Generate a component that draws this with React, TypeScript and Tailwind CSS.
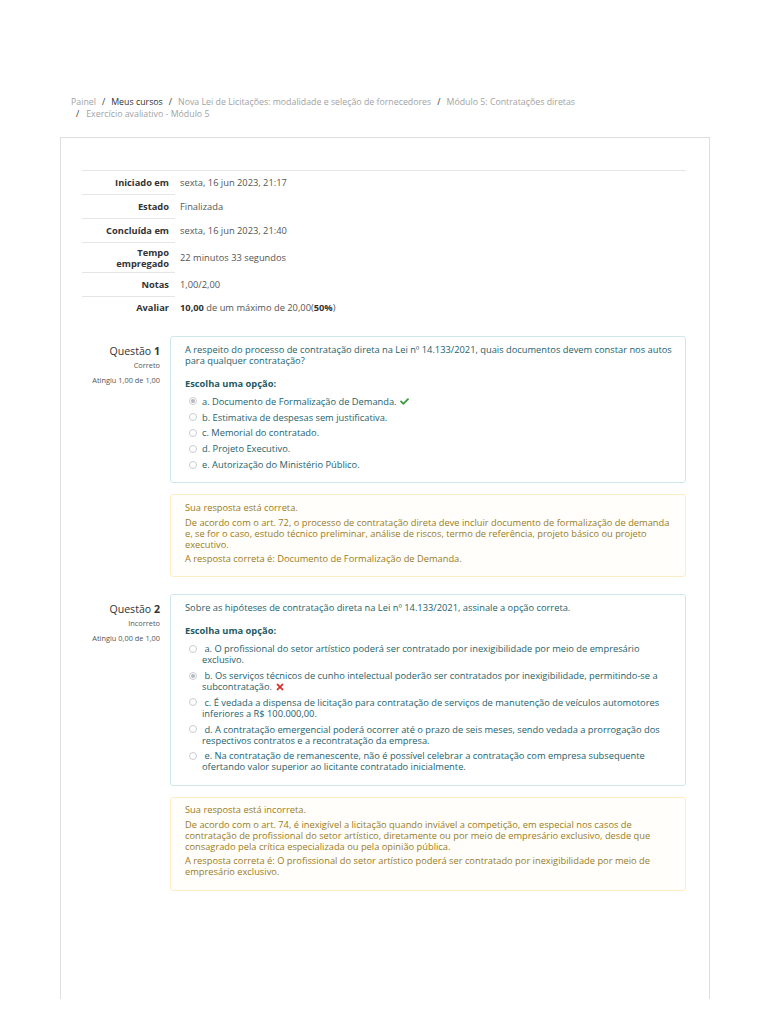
import React from 'react';

const font = { fontFamily: '"Open Sans", "Noto Sans", sans-serif' };

type Option = { text: string; checked?: boolean; mark?: 'ok' | 'bad' };

const CheckIcon = () => (
  <svg viewBox="0 0 512 512" className="inline-block w-[9px] h-[9px] ml-[3px] -mt-[2px] fill-[#3a9a3e]">
    <path d="M173.898 439.404l-166.4-166.4c-9.997-9.997-9.997-26.206 0-36.204l36.203-36.204c9.997-9.998 26.207-9.998 36.204 0L192 312.69 432.095 72.596c9.997-9.997 26.207-9.997 36.204 0l36.203 36.204c9.997 9.997 9.997 26.206 0 36.204l-294.4 294.401c-9.998 9.997-26.207 9.997-36.204-.001z" />
  </svg>
);

const CrossIcon = () => (
  <svg viewBox="0 0 352 512" className="inline-block w-[8px] h-[10px] ml-[4px] -mt-[2px] fill-[#d8322e]">
    <path d="M242.72 256l100.07-100.07c12.280-12.280 12.280-32.190 0-44.480l-22.240-22.240c-12.280-12.280-32.190-12.280-44.480 0L176 189.280 75.930 89.210c-12.280-12.280-32.190-12.280-44.480 0L9.210 111.450c-12.280 12.280-12.280 32.190 0 44.480L109.280 256 9.210 356.070c-12.280 12.280-12.280 32.190 0 44.480l22.240 22.240c12.280 12.280 32.200 12.280 44.480 0L176 322.720l100.070 100.070c12.280 12.280 32.200 12.280 44.480 0l22.240-22.240c12.280-12.280 12.280-32.190 0-44.480L242.720 256z" />
  </svg>
);

const Radio = ({ checked }: { checked?: boolean }) => (
  <span className="mt-[1.5px] flex-shrink-0 w-[8px] h-[8px] rounded-full border border-[#c8cdd1] bg-white flex items-center justify-center">
    {checked && <span className="w-[4px] h-[4px] rounded-full bg-[#b5babe]" />}
  </span>
);

const summary = [
  { label: 'Iniciado em', value: 'sexta, 16 jun 2023, 21:17', h: 'h-[24px]' },
  { label: 'Estado', value: 'Finalizada', h: 'h-[24px]' },
  { label: 'Concluída em', value: 'sexta, 16 jun 2023, 21:40', h: 'h-[24px]' },
  { label: 'Tempo empregado', value: '22 minutos 33 segundos', h: 'h-[30px]' },
  { label: 'Notas', value: '1,00/2,00', h: 'h-[24px]' },
];

function Question({
  num, state, grade, text, options, feedback, answer, right, gapTop,
}: {
  num: number; state: string; grade: string; text: string; options: Option[];
  feedback: string; answer: string; right: boolean; gapTop: string;
}) {
  return (
    <div className={gapTop}>
      <div className="flex">
        <div className="w-[78px] mr-[10px] text-right pt-[8px]">
          <div className="text-[10.6px] leading-[14px] text-[#333]">Questão <span className="font-bold">{num}</span></div>
          <div className="text-[7.4px] leading-[9px] mt-[3px] text-[#555]">{state}</div>
          <div className="text-[7.4px] leading-[9px] mt-[6px] text-[#555]">{grade}</div>
        </div>
        <div className="flex-1 border border-[#cfe6ec] rounded-[3px] bg-white pl-[14px] pr-[10px] pb-[10px] pt-[6.5px]">
          <div className="text-[9.3px] leading-[11px] text-[#24626c]">{text}</div>
          <div className="text-[9.3px] leading-[11px] font-bold text-[#1d5a64] mt-[12px]">Escolha uma opção:</div>
          <div className="mt-[5px]">
            {options.map((o, i) => (
              <div key={i} className="flex items-start pl-[4px] py-[2.4px]">
                <Radio checked={o.checked} />
                <div className="ml-[5px] text-[9.3px] leading-[11px] text-[#24626c]">
                  {o.text}
                  {o.mark === 'ok' && <CheckIcon />}
                  {o.mark === 'bad' && <CrossIcon />}
                </div>
              </div>
            ))}
          </div>
        </div>
      </div>
      <div className="ml-[88px] mt-[11px] border border-[#fbeec6] rounded-[3px] bg-[#fffefa] pl-[14px] pr-[10px] pt-[6.5px] pb-[12.5px] text-[9.3px] leading-[11px] text-[#9a7b1d]">
        <div>Sua resposta está {right ? 'correta' : 'incorreta'}.</div>
        <div className="mt-[4px]">{feedback}</div>
        <div className="mt-[3px]">{answer}</div>
      </div>
    </div>
  );
}

export default function App() {
  return (
    <div className="w-[768px] h-[1024px] bg-white overflow-hidden" style={font}>
      {/* breadcrumb */}
      <div className="pt-[96px] pl-[71px] text-[8.8px] leading-[12px] text-[#a3a3a3]">
        <div>
          <span>Painel</span>
          <span className="mx-[6px] text-[#333]">/</span>
          <span className="text-[#333]">Meus cursos</span>
          <span className="mx-[6px] text-[#333]">/</span>
          <span>Nova Lei de Licitações: modalidade e seleção de fornecedores</span>
          <span className="mx-[6px] text-[#333]">/</span>
          <span>Módulo 5: Contratações diretas</span>
        </div>
        <div className="pl-[5px]">
          <span className="mr-[7px] text-[#333]">/</span>
          <span>Exercício avaliativo - Módulo 5</span>
        </div>
      </div>

      {/* main card */}
      <div className="mt-[17px] ml-[60px] w-[650px] h-[862px] border border-b-0 border-[#dcdfe2] pl-[21px] pr-[23px] pt-[32px]">
        <div className="border-t border-[#e3e6e8]">
          {summary.map((r) => (
            <div key={r.label} className={`flex items-center ${r.h}`}>
              <div className="w-[93px] h-full flex items-center justify-end pr-[6px] border-b border-[#e3e6e8] text-right text-[9.3px] leading-[11px] font-bold text-[#333]">
                {r.label === 'Tempo empregado' ? <span>Tempo<br />empregado</span> : r.label}
              </div>
              <div className="pl-[5px] text-[9.3px] text-[#555]">{r.value}</div>
            </div>
          ))}
          <div className="flex items-center h-[22px]">
            <div className="w-[93px] pr-[6px] text-right text-[9.3px] font-bold text-[#333]">Avaliar</div>
            <div className="pl-[5px] text-[9.3px] text-[#555]">
              <span className="font-bold text-[#333]">10,00</span> de um máximo de 20,00(<span className="font-bold text-[#333]">50%</span>)
            </div>
          </div>
        </div>

        <Question
          gapTop="mt-[17px]"
          num={1}
          state="Correto"
          grade="Atingiu 1,00 de 1,00"
          text="A respeito do processo de contratação direta na Lei nº 14.133/2021, quais documentos devem constar nos autos para qualquer contratação?"
          options={[
            { text: 'a. Documento de Formalização de Demanda.', checked: true, mark: 'ok' },
            { text: 'b. Estimativa de despesas sem justificativa.' },
            { text: 'c. Memorial do contratado.' },
            { text: 'd. Projeto Executivo.' },
            { text: 'e. Autorização do Ministério Público.' },
          ]}
          right
          feedback="De acordo com o art. 72, o processo de contratação direta deve incluir documento de formalização de demanda e, se for o caso, estudo técnico preliminar, análise de riscos, termo de referência, projeto básico ou projeto executivo."
          answer="A resposta correta é: Documento de Formalização de Demanda."
        />

        <Question
          gapTop="mt-[17px]"
          num={2}
          state="Incorreto"
          grade="Atingiu 0,00 de 1,00"
          text="Sobre as hipóteses de contratação direta na Lei nº 14.133/2021, assinale a opção correta."
          options={[
            { text: '\u00a0a. O profissional do setor artístico poderá ser contratado por inexigibilidade por meio de empresário exclusivo.' },
            { text: '\u00a0b. Os serviços técnicos de cunho intelectual poderão ser contratados por inexigibilidade, permitindo-se a subcontratação.', checked: true, mark: 'bad' },
            { text: '\u00a0c. É vedada a dispensa de licitação para contratação de serviços de manutenção de veículos automotores inferiores a R$ 100.000,00.' },
            { text: '\u00a0d. A contratação emergencial poderá ocorrer até o prazo de seis meses, sendo vedada a prorrogação dos respectivos contratos e a recontratação da empresa.' },
            { text: '\u00a0e. Na contratação de remanescente, não é possível celebrar a contratação com empresa subsequente ofertando valor superior ao licitante contratado inicialmente.' },
          ]}
          right={false}
          feedback="De acordo com o art. 74, é inexigível a licitação quando inviável a competição, em especial nos casos de contratação de profissional do setor artístico, diretamente ou por meio de empresário exclusivo, desde que consagrado pela crítica especializada ou pela opinião pública."
          answer="A resposta correta é: O profissional do setor artístico poderá ser contratado por inexigibilidade por meio de empresário exclusivo."
        />
      </div>
    </div>
  );
}
